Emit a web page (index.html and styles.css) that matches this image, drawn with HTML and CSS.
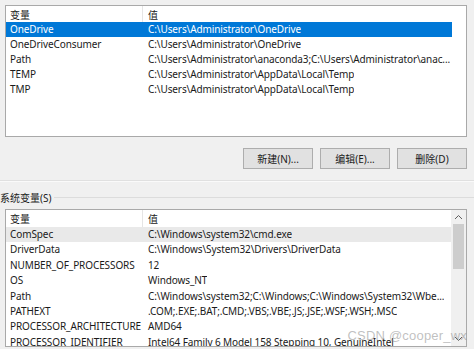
FILE: index.html
```html
<!DOCTYPE html>
<html lang="zh-CN">
<head>
    <meta charset="UTF-8">
    <title>环境变量</title>
    <link rel="stylesheet" href="styles.css">
</head>
<body>
    <div class="dialog">
        <div class="list list-user">
            <div class="row head">
                <span class="name">变量</span>
                <span class="value">值</span>
            </div>
            <div class="row selected">
                <span class="name">OneDrive</span>
                <span class="value">C:\Users\Administrator\OneDrive</span>
            </div>
            <div class="row">
                <span class="name">OneDriveConsumer</span>
                <span class="value">C:\Users\Administrator\OneDrive</span>
            </div>
            <div class="row">
                <span class="name">Path</span>
                <span class="value">C:\Users\Administrator\anaconda3;C:\Users\Administrator\anac...</span>
            </div>
            <div class="row">
                <span class="name">TEMP</span>
                <span class="value">C:\Users\Administrator\AppData\Local\Temp</span>
            </div>
            <div class="row">
                <span class="name">TMP</span>
                <span class="value">C:\Users\Administrator\AppData\Local\Temp</span>
            </div>
        </div>

        <div class="buttons">
            <button>新建(N)...</button>
            <button>编辑(E)...</button>
            <button>删除(D)</button>
        </div>

        <div class="divider"></div>

        <div class="group-title">
            <span>系统变量(S)</span>
            <div class="group-line"></div>
        </div>

        <div class="list list-system">
            <div class="rows">
                <div class="row head">
                    <span class="name">变量</span>
                    <span class="value">值</span>
                </div>
                <div class="row inactive">
                    <span class="name">ComSpec</span>
                    <span class="value">C:\Windows\system32\cmd.exe</span>
                </div>
                <div class="row">
                    <span class="name">DriverData</span>
                    <span class="value">C:\Windows\System32\Drivers\DriverData</span>
                </div>
                <div class="row">
                    <span class="name">NUMBER_OF_PROCESSORS</span>
                    <span class="value">12</span>
                </div>
                <div class="row">
                    <span class="name">OS</span>
                    <span class="value">Windows_NT</span>
                </div>
                <div class="row">
                    <span class="name">Path</span>
                    <span class="value">C:\Windows\system32;C:\Windows;C:\Windows\System32\Wbe...</span>
                </div>
                <div class="row">
                    <span class="name">PATHEXT</span>
                    <span class="value">.COM;.EXE;.BAT;.CMD;.VBS;.VBE;.JS;.JSE;.WSF;.WSH;.MSC</span>
                </div>
                <div class="row">
                    <span class="name">PROCESSOR_ARCHITECTURE</span>
                    <span class="value">AMD64</span>
                </div>
                <div class="row">
                    <span class="name">PROCESSOR_IDENTIFIER</span>
                    <span class="value">Intel64 Family 6 Model 158 Stepping 10, GenuineIntel</span>
                </div>
            </div>
            <div class="scrollbar">
                <svg class="arrow" width="9" height="6" viewBox="0 0 9 6"><path d="M1 5 L4.5 1.5 L8 5" fill="none" stroke="#606060" stroke-width="1"/></svg>
                <div class="thumb"></div>
                <svg class="arrow down" width="9" height="6" viewBox="0 0 9 6"><path d="M1 1 L4.5 4.5 L8 1" fill="none" stroke="#606060" stroke-width="1"/></svg>
            </div>
        </div>
    </div>
    <div class="watermark">CSDN @cooper_wx</div>
</body>
</html>
```

FILE: styles.css
```css
body {
    margin: 0;
    background: #f0f0f0;
    font-family: "Noto Sans", "Noto Sans CJK SC", sans-serif;
    font-size: 10px;
    color: #1a1a1a;
    width: 474px;
    height: 349px;
    overflow: hidden;
    position: relative;
}
.dialog {
    padding: 5px 7px 0 5px;
}
.list {
    background: #fff;
    border: 1px solid #a9a9a9;
    overflow: hidden;
    letter-spacing: -0.1px;
}
.list-user {
    height: 130px;
}
.row {
    display: flex;
    height: 15px;
    line-height: 15px;
    white-space: nowrap;
}
.row.head {
    height: 16px;
    line-height: 18px;
}
.row .name {
    width: 137px;
    padding-left: 4px;
    box-sizing: border-box;
    flex-shrink: 0;
    overflow: hidden;
}
.row .value {
    padding-left: 5px;
    overflow: hidden;
}
.row.head .name {
    border-right: 1px solid #e5e5e5;
}
.list-user .row {
    width: 446px;
}
.row.selected {
    background: #0078d7;
    color: #fff;
}
.row.inactive {
    background: #e9e9e9;
}
.buttons {
    display: flex;
    justify-content: flex-end;
    gap: 7px;
    margin-top: 11px;
}
.buttons button {
    width: 70px;
    height: 21px;
    background: #e1e1e1;
    border: 1px solid #adadad;
    font-family: inherit;
    font-size: 10px;
    color: #1a1a1a;
    padding: 0;
}
.divider {
    margin: 11px -7px 0 -5px;
    border-top: 1px solid #e0e0e0;
    border-bottom: 1px solid #fafafa;
}
.group-title {
    display: flex;
    align-items: center;
    margin: 8px -7px 0 -5px;
    height: 14px;
}
.group-title span {
    padding-right: 2px;
}
.group-line {
    flex: 1;
    border-top: 1px solid #dcdcdc;
}
.list-system {
    display: flex;
    margin-top: 5px;
    height: 136px;
}
.list-system .rows {
    flex: 1;
    min-width: 0;
}
.list-system .row {
    height: 15.4px;
    line-height: 15.4px;
}
.list-system .row.head {
    height: 17px;
    line-height: 18px;
}
.scrollbar {
    width: 15px;
    flex-shrink: 0;
    background: #f0f0f0;
    display: flex;
    flex-direction: column;
    align-items: center;
}
.arrow {
    margin-top: 4px;
    margin-bottom: 4px;
}
.arrow.down {
    margin-top: auto;
    margin-bottom: 4px;
}
.thumb {
    width: 11px;
    height: 45px;
    background: #cdcdcd;
}
.watermark {
    position: absolute;
    right: 7px;
    bottom: 6px;
    font-family: "Liberation Sans", sans-serif;
    font-size: 13px;
    letter-spacing: 0.2px;
    color: rgba(130, 130, 130, 0.5);
}
```
